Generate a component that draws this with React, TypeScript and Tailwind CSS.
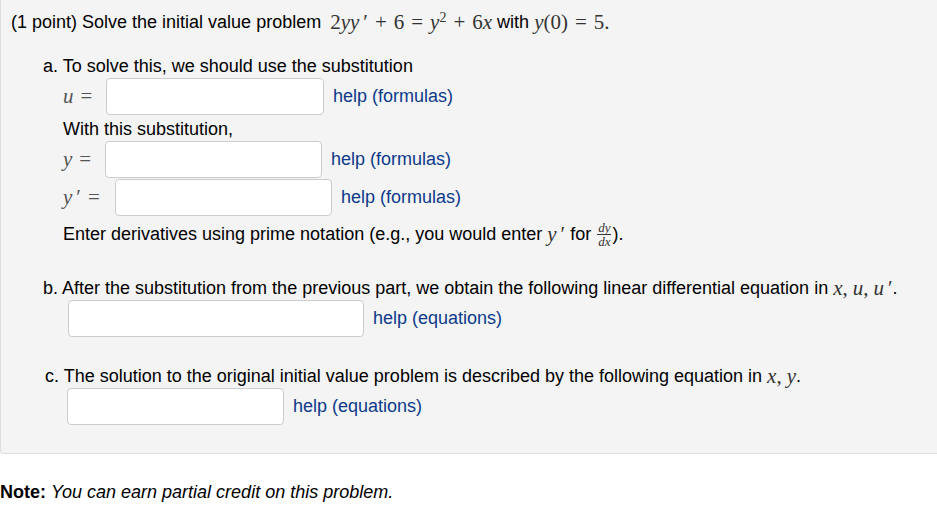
import React from "react";

const M = ({ children }: { children: React.ReactNode }) => <span className="italic">{children}</span>;

const Op = ({ children }: { children: React.ReactNode }) => (
  <span className="mx-[7px] not-italic">{children}</span>
);

const Comma = () => <span className="mr-[5px]">,</span>;

function Math({ children, className = "" }: { children: React.ReactNode; className?: string }) {
  return (
    <span className={"font-['Liberation_Serif',serif] text-[21px] text-[#333] " + className}>{children}</span>
  );
}

function Input({ w }: { w: string }) {
  return <div className={"h-[37px] bg-white border border-[#cccccc] rounded-[4px] shrink-0 " + w} />;
}

function Help({ children }: { children: React.ReactNode }) {
  return <span className="text-[#0c3a8a] ml-[9px]">{children}</span>;
}

export default function App() {
  return (
    <div className="w-[937px] h-[512px] bg-white font-['Liberation_Sans',Arial,sans-serif] text-[18px] text-black overflow-hidden">
      <div className="w-[960px] h-[454px] bg-[#f4f4f4] border-b border-l border-[#dddddd] rounded-bl-[4px] pl-[10px] pt-[12px]">
        <div className="h-[20px] leading-[20px] flex items-center whitespace-pre">
          <span>(1 point) Solve the initial value problem </span>
          <Math className="ml-[4px]">
            2<M>yy</M>
            <span className="ml-[4px]">′</span>
            <Op>+</Op>6<Op>=</Op>
            <M>y</M>
            <sup className="text-[14px]">2</sup>
            <Op>+</Op>6<M>x</M>
          </Math>
          <span> with </span>
          <Math>
            <M>y</M>(0)<Op>=</Op>5.
          </Math>
        </div>

        <div className="pl-[32px] mt-[24px]">
          <div className="h-[20px] leading-[20px]">a. To solve this, we should use the substitution</div>
          <div className="pl-[20px]">
            <div className="flex items-center mt-[2px]">
              <Math className="w-[43px] text-[#555]">
                <M>u</M>
                <Op>=</Op>
              </Math>
              <Input w="w-[218px]" />
              <Help>help (formulas)</Help>
            </div>
            <div className="h-[20px] leading-[20px] mt-[4px]">With this substitution,</div>
            <div className="flex items-center mt-[2px]">
              <Math className="w-[42px] text-[#555]">
                <M>y</M>
                <Op>=</Op>
              </Math>
              <Input w="w-[217px]" />
              <Help>help (formulas)</Help>
            </div>
            <div className="flex items-center mt-[1px]">
              <Math className="w-[52px] text-[#555]">
                <M>y</M>
                <span className="ml-[4px]">′</span>
                <Op>=</Op>
              </Math>
              <Input w="w-[217px]" />
              <Help>help (formulas)</Help>
            </div>
            <div className="h-[20px] leading-[20px] mt-[8px] flex items-center whitespace-pre">
              <span>Enter derivatives using prime notation (e.g., you would enter </span>
              <Math>
                <M>y</M>
                <span className="ml-[4px]">′</span>
              </Math>
              <span> for </span>
              <span className="inline-flex flex-col items-center font-['Liberation_Serif',serif] italic text-[13px] text-[#333] mx-[1px]">
                <span className="block h-[13px] leading-[13px] px-[1px]">dy</span>
                <span className="block w-full h-px bg-[#333]" />
                <span className="block h-[13px] leading-[13px] px-[1px]">dx</span>
              </span>
              <span>).</span>
            </div>
          </div>

          <div className="h-[20px] leading-[20px] mt-[34px] flex items-center whitespace-pre">
            <span>b. After the substitution from the previous part, we obtain the following linear differential equation in </span>
            <Math>
              <M>x</M>
              <Comma />
              <M>u</M>
              <Comma />
              <M>u</M>
              <span className="ml-[4px]">′</span>
            </Math>
            <span>.</span>
          </div>
          <div className="flex items-center mt-[2px] pl-[25px]">
            <Input w="w-[296px]" />
            <Help>help (equations)</Help>
          </div>

          <div className="h-[20px] leading-[20px] mt-[29px] pl-[2px] flex items-center whitespace-pre">
            <span>c. The solution to the original initial value problem is described by the following equation in </span>
            <Math>
              <M>x</M>
              <Comma />
              <M>y</M>
            </Math>
            <span>.</span>
          </div>
          <div className="flex items-center mt-[2px] pl-[24px]">
            <Input w="w-[217px]" />
            <Help>help (equations)</Help>
          </div>
        </div>
      </div>

      <div className="mt-[28px] h-[20px] leading-[20px]">
        <span className="font-bold">Note: </span>
        <span className="italic">You can earn partial credit on this problem.</span>
      </div>
    </div>
  );
}
